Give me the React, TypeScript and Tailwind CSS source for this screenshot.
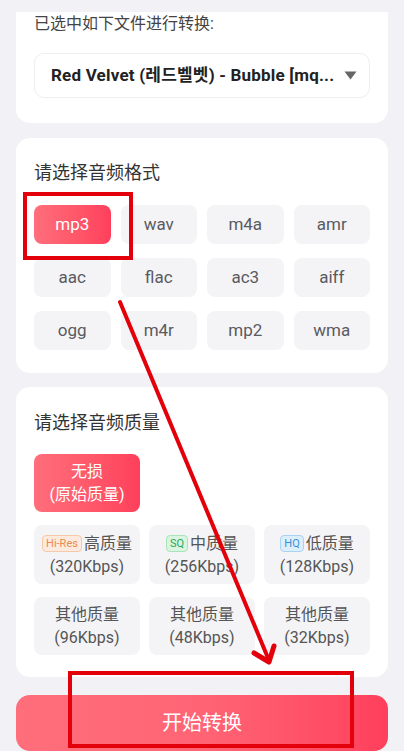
import React from 'react';

const formats = ['mp3', 'wav', 'm4a', 'amr', 'aac', 'flac', 'ac3', 'aiff', 'ogg', 'm4r', 'mp2', 'wma'];

const font = { fontFamily: 'Roboto, "Noto Sans CJK SC", sans-serif' };

function Badge({ label, tone }: { label: string; tone: 'orange' | 'green' | 'blue' }) {
  const cls =
    tone === 'orange'
      ? 'text-[#e98a4f] bg-[#fdeadf] border-[#f6c9ab]'
      : tone === 'green'
        ? 'text-[#2ba659] bg-[#d9f5e0] border-[#a9e3b9]'
        : 'text-[#3b8fd6] bg-[#ddeefb] border-[#aad2f2]';
  return (
    <span className={`mr-[2px] rounded-[4px] border px-[3px] text-[11px] leading-[15px] ${cls}`}>{label}</span>
  );
}

export default function App() {
  return (
    <div className="relative h-[751px] w-full overflow-hidden bg-[#f2f2f6]" style={font}>
      <div className="px-4 pt-3">
        {/* selected file */}
        <div className="rounded-b-[14px] bg-white px-[18px] pb-[25px] pt-[2px]">
          <p className="text-[16px] leading-[20px] text-[#444]">已选中如下文件进行转换:</p>
          <div className="mt-[19px] flex h-[45px] items-center justify-between rounded-[10px] border border-[#eeeef2] pl-[16px] pr-[12px]">
            <span className="text-[17px] font-bold tracking-[0.2px] text-[#222]">Red Velvet (레드벨벳) - Bubble [mq...</span>
            <svg width="13" height="9" viewBox="0 0 13 9">
              <path d="M0.5 0.5 H12.5 L6.5 8.5 Z" fill="#666" />
            </svg>
          </div>
        </div>

        {/* format */}
        <div className="mt-[15px] rounded-[14px] bg-white px-[18px] pb-[23px] pt-[23px]">
          <h2 className="text-[18px] leading-[24px] text-[#333]">请选择音频格式</h2>
          <div className="mt-[20px] grid grid-cols-4 gap-x-[10px] gap-y-[14px]">
            {formats.map((f, i) => (
              <div
                key={f}
                className={`flex h-[39px] items-center justify-center rounded-[8px] text-[17px] ${
                  i === 0
                    ? 'bg-gradient-to-r from-[#ff6e7b] to-[#ff3f5c] text-white'
                    : 'bg-[#f4f4f7] text-[#5a5a60]'
                }`}
              >
                {f}
              </div>
            ))}
          </div>
        </div>

        {/* quality */}
        <div className="mt-[14px] rounded-[14px] bg-white px-[18px] pb-[22px] pt-[24px]">
          <h2 className="text-[18px] leading-[24px] text-[#333]">请选择音频质量</h2>
          <div className="mt-[19px] grid grid-cols-3 gap-x-[9px] gap-y-[13px]">
            <div className="flex h-[58px] flex-col items-center justify-center rounded-[8px] bg-gradient-to-r from-[#ff6e7b] to-[#ff3f5c] text-[16px] leading-[23px] text-white">
              <span>无损</span>
              <span>(原始质量)</span>
            </div>
            <div className="col-span-2" />
            <div className="flex h-[59px] flex-col items-center justify-center rounded-[8px] bg-[#f4f4f7] text-[16px] leading-[23px] text-[#555]">
              <span className="flex items-center">
                <Badge label="Hi-Res" tone="orange" />
                高质量
              </span>
              <span>(320Kbps)</span>
            </div>
            <div className="flex h-[59px] flex-col items-center justify-center rounded-[8px] bg-[#f4f4f7] text-[16px] leading-[23px] text-[#555]">
              <span className="flex items-center">
                <Badge label="SQ" tone="green" />
                中质量
              </span>
              <span>(256Kbps)</span>
            </div>
            <div className="flex h-[59px] flex-col items-center justify-center rounded-[8px] bg-[#f4f4f7] text-[16px] leading-[23px] text-[#555]">
              <span className="flex items-center">
                <Badge label="HQ" tone="blue" />
                低质量
              </span>
              <span>(128Kbps)</span>
            </div>
            {['96', '48', '32'].map((k) => (
              <div
                key={k}
                className="flex h-[58px] flex-col items-center justify-center rounded-[8px] bg-[#f4f4f7] text-[16px] leading-[23px] text-[#555]"
              >
                <span>其他质量</span>
                <span>({k}Kbps)</span>
              </div>
            ))}
          </div>
        </div>

        <button className="mt-[18px] flex h-[56px] w-full items-center justify-center rounded-[14px] bg-gradient-to-r from-[#ff6e7b] via-[#ff6475] to-[#ff3f5c] text-[20px] text-white">
          开始转换
        </button>
      </div>

      {/* annotations */}
      <svg className="pointer-events-none absolute left-0 top-0" width="404" height="751" viewBox="0 0 404 751">
        <rect x="25" y="194" width="106" height="64" fill="none" stroke="#e3000b" strokeWidth="4" />
        <rect x="70" y="673" width="282" height="73" fill="none" stroke="#e3000b" strokeWidth="4" />
        <path d="M120 302 L268 658" stroke="#e3000b" strokeWidth="4" strokeLinecap="round" fill="none" />
        <path d="M254 653 L269 662 L274 646" stroke="#e3000b" strokeWidth="5" strokeLinecap="round" strokeLinejoin="round" fill="none" />
      </svg>
    </div>
  );
}
